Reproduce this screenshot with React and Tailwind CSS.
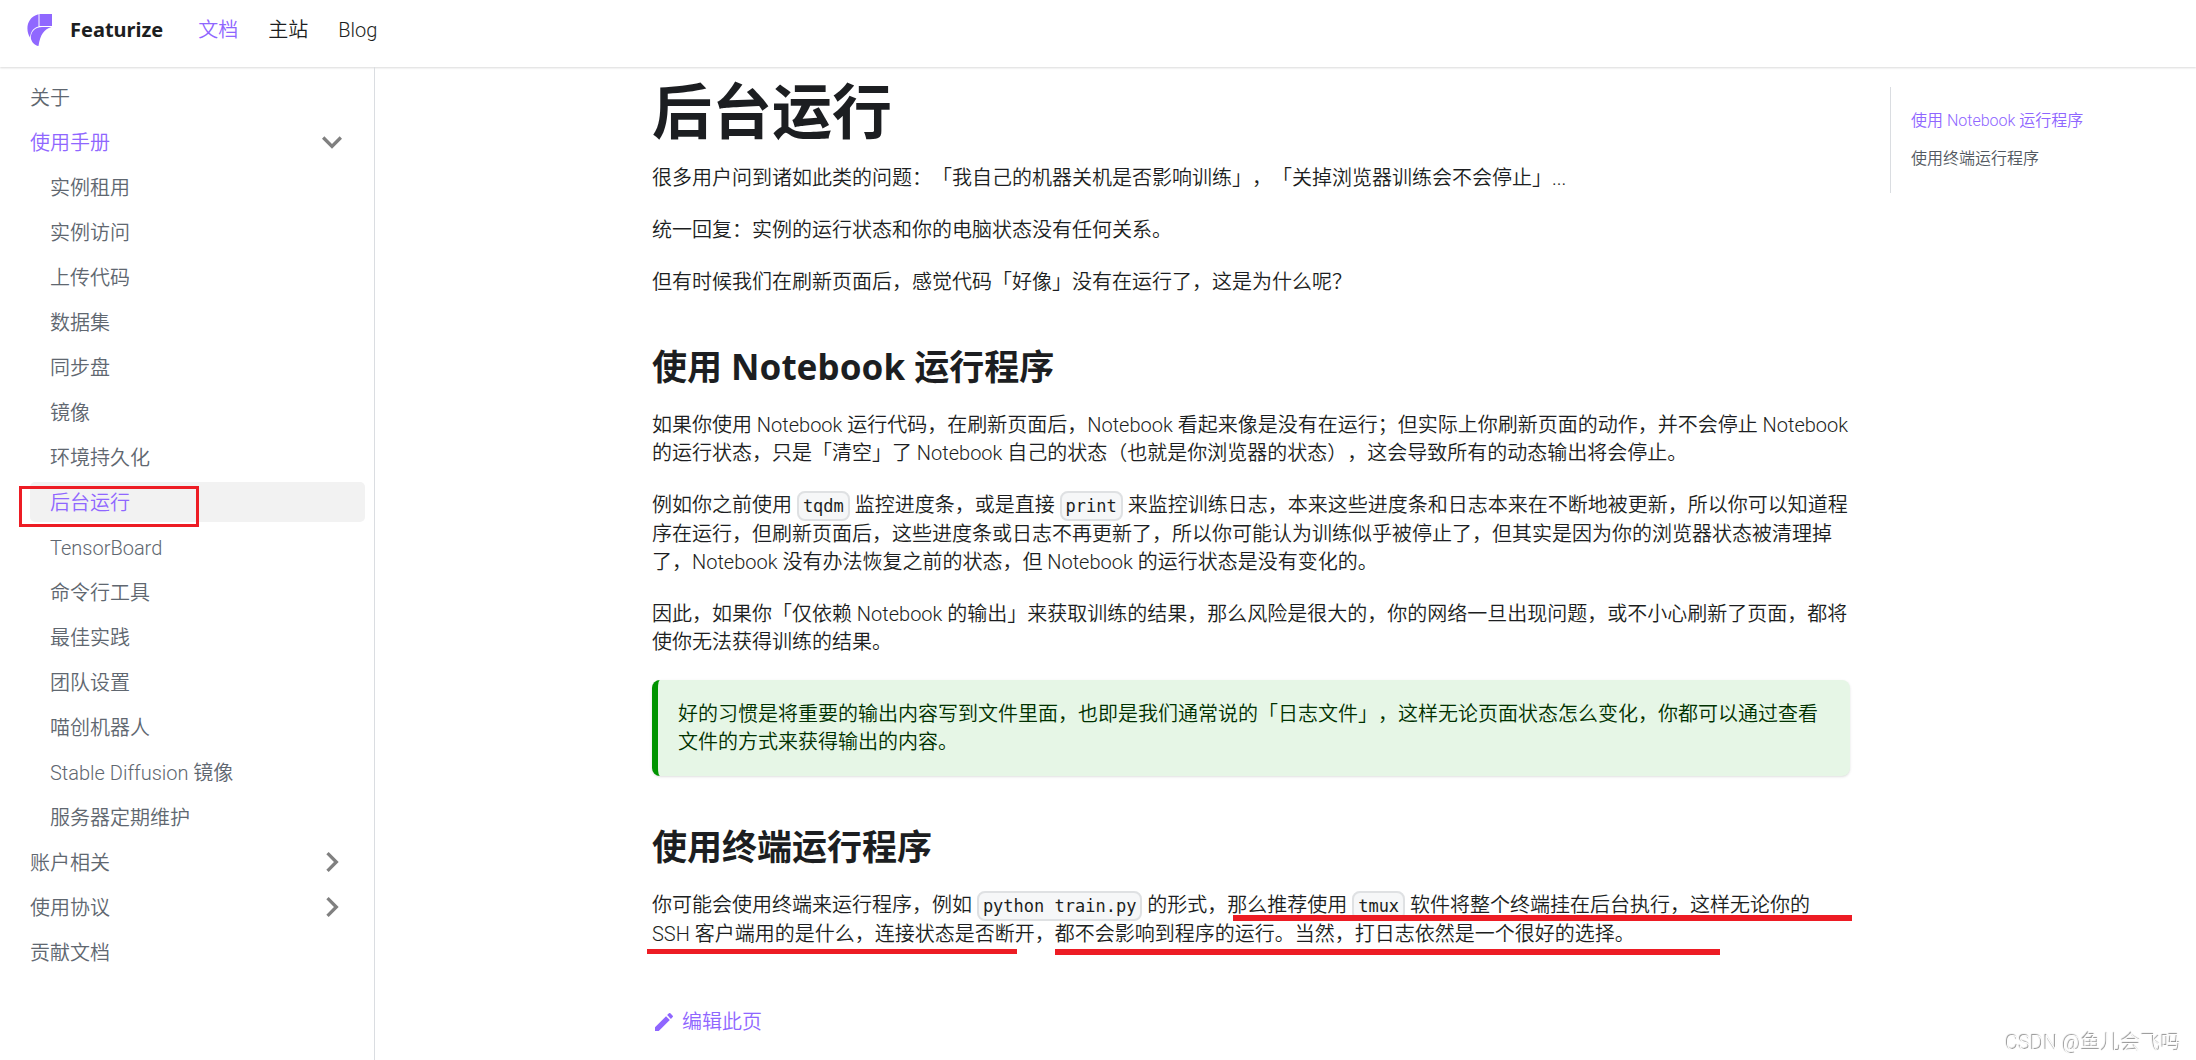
const guideItems = [
  "实例租用",
  "实例访问",
  "上传代码",
  "数据集",
  "同步盘",
  "镜像",
  "环境持久化",
  "后台运行",
  "TensorBoard",
  "命令行工具",
  "最佳实践",
  "团队设置",
  "喵创机器人",
  "Stable Diffusion 镜像",
  "服务器定期维护",
];

const Logo = () => (
  <svg viewBox="0 0 25 32" className="w-[25px] h-8" fill="#9068ff" aria-hidden="true">
    <path d="M12.5 0H25v12H12.5z" />
    <path d="M11.5 0.3V12.4C7 13.5 4 16.5 3 23.5C-1.5 17 -1 3.5 11.5 0.3z" />
    <path d="M24.5 13C17 15.5 13.5 20 11.5 32C7.5 31.5 4.5 28 3.8 24C4 16.5 9 13 15 13z" />
  </svg>
);

const Chevron = ({ className }) => (
  <svg viewBox="0 0 24 24" className={`w-10 h-10 ${className}`} fill="#808080" aria-hidden="true">
    <path d="M7.41 15.41L12 10.83l4.59 4.58L18 14l-6-6-6 6z" />
  </svg>
);

const Category = ({ label, open }) => (
  <button
    type="button"
    aria-expanded={open}
    className={`flex w-full h-10 items-center justify-between pr-[13px] text-left ${open ? "text-[#8f66ff]" : ""}`}
  >
    <span className="pt-0.5">{label}</span>
    <Chevron className={open ? "rotate-180" : "rotate-90"} />
  </button>
);

const Code = ({ children }) => (
  <code className="rounded-lg border-2 border-[#dfe1e3] bg-[#f6f7f8] px-1 py-[3px] font-['DejaVu_Sans_Mono','Noto_Sans_CJK_SC',monospace] text-[17px]">
    {children}
  </code>
);

const Sidebar = () => (
  <aside className="w-[375px] shrink-0 border-r border-[#dadde1] pt-2.5 pl-[30px] pr-[9px] text-[#606770]">
    <ul className="space-y-[5px]">
      <li>
        <a href="#about" className="flex h-10 items-center pt-0.5">关于</a>
      </li>
      <li>
        <Category label="使用手册" open />
        <ul className="mt-[5px] space-y-[5px]">
          {guideItems.map((item) => (
            <li key={item} className="relative">
              <a
                href="#guide"
                className={`flex h-10 items-center rounded-[5px] pt-0.5 pl-5 ${
                  item === "后台运行" ? "bg-[#f2f2f2] text-[#8f66ff]" : ""
                }`}
              >
                {item}
              </a>
              {/* highlight box */}
              {item === "后台运行" && (
                <div className="absolute top-1 -left-[11px] h-[41px] w-[180px] border-3 border-[#ed1c24]"></div>
              )}
            </li>
          ))}
        </ul>
      </li>
      <li>
        <Category label="账户相关" open={false} />
      </li>
      <li>
        <Category label="使用协议" open={false} />
      </li>
      <li>
        <a href="#contribute" className="flex h-10 items-center pt-0.5">贡献文档</a>
      </li>
    </ul>
  </aside>
);

const Heading = ({ children }) => (
  <h2 className="mt-[49px] mb-[22px] font-['Noto_Sans','Noto_Sans_CJK_SC',sans-serif] text-[35px] leading-11 font-bold">
    {children}
  </h2>
);

const Article = () => (
  <article className="min-w-0 flex-1 pt-[9px] [&_p]:mb-6">
    <h1 className="mb-[13px] text-[60px] leading-[75px] font-bold">后台运行</h1>
    <p>很多用户问到诸如此类的问题：「我自己的机器关机是否影响训练」，「关掉浏览器训练会不会停止」...</p>
    <p>统一回复：实例的运行状态和你的电脑状态没有任何关系。</p>
    <p>但有时候我们在刷新页面后，感觉代码「好像」没有在运行了，这是为什么呢？</p>

    <Heading>使用 Notebook 运行程序</Heading>
    <p>
      如果你使用 Notebook 运行代码，在刷新页面后，Notebook 看起来像是没有在运行；但实际上你刷新页面的动作，并不会停止 Notebook
      的运行状态，只是「清空」了 Notebook 自己的状态（也就是你浏览器的状态），这会导致所有的动态输出将会停止。
    </p>
    <p>
      例如你之前使用 <Code>tqdm</Code> 监控进度条，或是直接 <Code>print</Code>{" "}
      来监控训练日志，本来这些进度条和日志本来在不断地被更新，所以你可以知道程序在运行，但刷新页面后，这些进度条或日志不再更新了，所以你可能认为训练似乎被停止了，但其实是因为你的浏览器状态被清理掉了，Notebook
      没有办法恢复之前的状态，但 Notebook 的运行状态是没有变化的。
    </p>
    <p>
      因此，如果你「仅依赖 Notebook 的输出」来获取训练的结果，那么风险是很大的，你的网络一旦出现问题，或不小心刷新了页面，都将使你无法获得训练的结果。
    </p>

    <div className="rounded-lg border-l-[6px] border-[#009400] bg-[#e6f6e6] px-5 py-5 text-[#003100] shadow-sm">
      好的习惯是将重要的输出内容写到文件里面，也即是我们通常说的「日志文件」，这样无论页面状态怎么变化，你都可以通过查看文件的方式来获得输出的内容。
    </div>

    <Heading>使用终端运行程序</Heading>
    <div className="relative">
      <p>
        你可能会使用终端来运行程序，例如 <Code>python train.py</Code> 的形式，那么推荐使用 <Code>tmux</Code>{" "}
        软件将整个终端挂在后台执行，这样无论你的 SSH 客户端用的是什么，连接状态是否断开，都不会影响到程序的运行。当然，打日志依然是一个很好的选择。
      </p>
      {/* underline marks */}
      <div className="absolute top-6 left-[581px] h-1.5 w-[619px] bg-[#ed1c24]"></div>
      <div className="absolute top-[58px] -left-[5px] h-[5px] w-[370px] bg-[#ed1c24]"></div>
      <div className="absolute top-[58px] left-[403px] h-1.5 w-[665px] bg-[#ed1c24]"></div>
    </div>

    <a href="#edit" className="mt-9 inline-flex items-center gap-1.5 text-[#8f66ff]">
      <svg viewBox="0 0 40 40" className="h-6 w-6" fill="currentColor" aria-hidden="true">
        <path d="m34.5 11.7l-3 3.1-6.3-6.3 3.1-3q0.5-0.5 1.2-0.5t1.1 0.5l3.9 3.9q0.5 0.4 0.5 1.1t-0.5 1.2z m-29.5 17.1l18.4-18.5 6.3 6.3-18.4 18.4h-6.3v-6.2z" />
      </svg>
      编辑此页
    </a>
  </article>
);

const Toc = () => (
  <nav className="ml-10 w-[306px] shrink-0 pt-5 text-base/7">
    <ul className="space-y-2.5 border-l border-[#dadde1] py-5 pl-5 text-[#525860]">
      <li>
        <a href="#notebook" className="text-[#8f66ff]">使用 Notebook 运行程序</a>
      </li>
      <li>
        <a href="#terminal">使用终端运行程序</a>
      </li>
    </ul>
  </nav>
);

const App = () => (
  <div
    lang="zh-CN"
    className="flex min-h-screen flex-col bg-white font-[Roboto,'Noto_Sans_CJK_SC',sans-serif] text-xl leading-7 font-[350] text-[#1c1e21] [text-spacing-trim:space-all]"
  >
    <header className="flex h-[67px] items-center gap-[30px] pb-[7px] pl-[27px] shadow-[0_1px_2px_0_rgba(0,0,0,0.15)]">
      <a href="#home" className="mr-[5px] flex items-center gap-[18px]">
        <Logo />
        <b className="font-['Noto_Sans',sans-serif] font-bold">Featurize</b>
      </a>
      <a href="#docs" className="text-[#8f66ff]">文档</a>
      <a href="#main">主站</a>
      <a href="#blog">Blog</a>
    </header>

    <div className="flex flex-1">
      <Sidebar />
      <main className="flex min-w-0 flex-1 pl-[277px]">
        <Article />
        <Toc />
      </main>
    </div>

    <div className="fixed right-[15px] bottom-[3px] font-light text-white [text-shadow:-1px_-1px_1px_#888]">
      CSDN @鱼儿会飞吗
    </div>
  </div>
);

export default App;
